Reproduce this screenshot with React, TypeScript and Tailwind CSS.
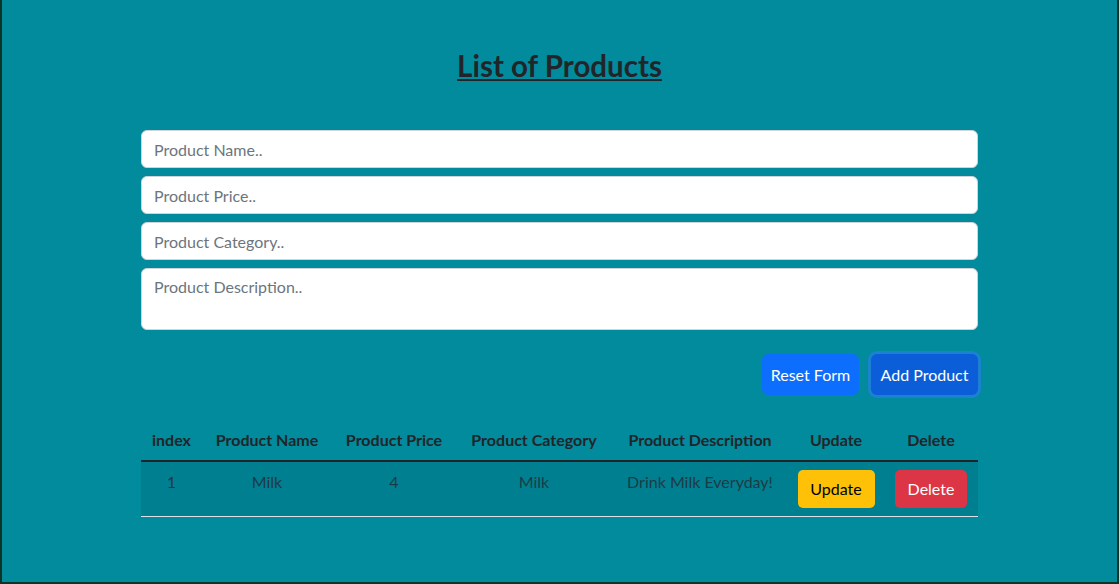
import React from "react";

const font = { fontFamily: "Lato, 'Noto Sans', sans-serif" };

export default function App() {
  return (
    <div
      style={font}
      className="h-[584px] w-[1119px] bg-[#028a9d] border-2 border-t-0 border-[#0c3527] flex flex-col items-center"
    >
      <h2 className="mt-[46px] text-[29.5px] leading-[40px] font-bold text-[#212529] underline decoration-[2px] underline-offset-[2px]">
        List of Products
      </h2>
      <div className="w-[837px] mt-[44px] flex flex-col gap-[8px]">
        <input
          className="h-[38px] w-full rounded-[6px] border border-[#ced4da] bg-white px-[12px] text-[16px] text-[#212529] placeholder:text-[#6c757d] outline-none"
          placeholder="Product Name.."
        />
        <input
          className="h-[38px] w-full rounded-[6px] border border-[#ced4da] bg-white px-[12px] text-[16px] text-[#212529] placeholder:text-[#6c757d] outline-none"
          placeholder="Product Price.."
        />
        <input
          className="h-[38px] w-full rounded-[6px] border border-[#ced4da] bg-white px-[12px] text-[16px] text-[#212529] placeholder:text-[#6c757d] outline-none"
          placeholder="Product Category.."
        />
        <textarea
          className="h-[62px] w-full resize-none rounded-[6px] border border-[#ced4da] bg-white px-[12px] py-[6px] text-[16px] leading-[24px] text-[#212529] placeholder:text-[#6c757d] outline-none"
          placeholder="Product Description.."
        />
      </div>
      <div className="w-[837px] mt-[24px] flex justify-end gap-[12px]">
        <button className="h-[41px] w-[97px] rounded-[6px] bg-[#0d6efd] text-[16px] text-white">
          Reset Form
        </button>
        <button className="h-[41px] w-[107px] rounded-[6px] bg-[#0b5ed7] text-[16px] text-white ring-[3px] ring-[#1b82d1]">
          Add Product
        </button>
      </div>
      <div className="w-[837px] mt-[25px]">
        <div className="grid grid-cols-[61px_130px_124px_156px_176px_96px_94px] border-b-2 border-[#212529] text-[16px] font-bold text-[#212529] text-center">
          <div className="py-[8px] leading-[24px]">index</div>
          <div className="py-[8px] leading-[24px]">Product Name</div>
          <div className="py-[8px] leading-[24px]">Product Price</div>
          <div className="py-[8px] leading-[24px]">Product Category</div>
          <div className="py-[8px] leading-[24px]">Product Description</div>
          <div className="py-[8px] leading-[24px]">Update</div>
          <div className="py-[8px] leading-[24px]">Delete</div>
        </div>
        <div className="grid grid-cols-[61px_130px_124px_156px_176px_96px_94px] bg-[#007f91] border-b border-[#dee2e6] text-[16px] text-[#1d3b45] text-center">
          <div className="py-[8px] leading-[24px]">1</div>
          <div className="py-[8px] leading-[24px]">Milk</div>
          <div className="py-[8px] leading-[24px]">4</div>
          <div className="py-[8px] leading-[24px]">Milk</div>
          <div className="py-[8px] leading-[24px] whitespace-nowrap">Drink Milk Everyday!</div>
          <div className="py-[8px] flex justify-center">
            <button className="h-[38px] w-[77px] rounded-[5px] bg-[#ffc107] text-[16px] text-black">
              Update
            </button>
          </div>
          <div className="py-[8px] flex justify-center">
            <button className="h-[38px] w-[72px] rounded-[5px] bg-[#dc3545] text-[16px] text-white">
              Delete
            </button>
          </div>
        </div>
      </div>
    </div>
  );
}
